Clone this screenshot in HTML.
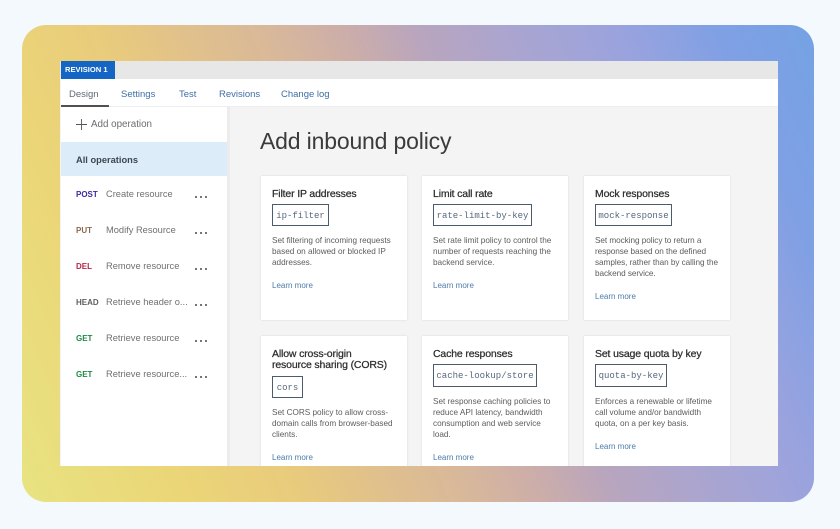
<!DOCTYPE html>
<html><head><meta charset="utf-8">
<style>
html,body{margin:0;padding:0}
body{width:840px;height:529px;overflow:hidden;position:relative;background:#f3f9fd;font-family:"Liberation Sans",sans-serif}
.a{position:absolute;white-space:nowrap}
#outer{position:absolute;left:22px;top:25px;width:792px;height:477px;border-radius:24px;background:
linear-gradient(67deg,#e8e382 0%,#ebd677 16%,#e9cb7c 28%,#e0c08c 37%,#d8b89a 45%,#cdaea8 52%,#b8a5be 60%,#aca5ce 68%,#9aa3de 80%,#80a0e4 90%,#74a2e4 100%)}
#win{position:absolute;left:60px;top:61px;width:718px;height:405px;background:#f4f4f4;overflow:hidden;filter:blur(.3px)}
#win .a{line-height:1}
.tab{font-size:9.5px;color:#3f6ea6;top:29px}
.m{font-size:8px;font-weight:bold;left:16px}
.op{font-size:9.3px;color:#707070;left:46px}
.dots{left:135px;width:12px;height:3px;display:flex;justify-content:space-between}
.dots i{display:block;width:2.4px;height:2.4px;border-radius:50%;background:#4a4a4a}
.card{position:absolute;width:146px;background:#fff;box-shadow:0 0 2px rgba(0,0,0,.12);overflow:hidden}
.card .t{position:absolute;left:11px;top:13px;font-size:10.5px;line-height:11.5px;color:#2d2d2d;letter-spacing:-.15px;-webkit-text-stroke:.25px #2d2d2d;white-space:nowrap}
.card .c{position:absolute;left:11px;height:22px;border:1px solid #4b5c6e;box-sizing:border-box;font:9px/22px "Liberation Mono",monospace;color:#55687d;text-align:center}
.card .d{position:absolute;left:11px;font-size:8.2px;line-height:11px;color:#5c5c5c;white-space:nowrap}
.card .l{position:absolute;left:11px;font-size:8px;line-height:10px;color:#4d7bab;white-space:nowrap}
</style></head>
<body>
<div id="outer"></div>
<div id="win">
  <div class="a" style="left:0;top:0;width:718px;height:18px;background:#e7e7e7"></div>
  <div class="a" style="left:1px;top:0;width:54px;height:18px;background:#1565c4;color:#fff;font-size:7.6px;font-weight:bold;line-height:18px;text-indent:4px">REVISION 1</div>
  <div class="a" style="left:1px;top:18px;width:717px;height:28px;background:#fff;border-bottom:1px solid #eee;box-sizing:border-box"></div>
  <div class="a tab" style="left:9px;color:#5f6a74">Design</div>
  <div class="a" style="left:1px;top:44px;width:48px;height:2px;background:#505050"></div>
  <div class="a tab" style="left:61px">Settings</div>
  <div class="a tab" style="left:119px">Test</div>
  <div class="a tab" style="left:159px">Revisions</div>
  <div class="a tab" style="left:221px">Change log</div>

  <div class="a" style="left:1px;top:46px;width:166px;height:359px;background:#fff"></div>
  <div class="a" style="left:167px;top:46px;width:3px;height:359px;background:#ececec"></div>
  <svg class="a" style="left:16px;top:58px" width="11" height="11" viewBox="0 0 11 11"><path d="M5.5 0V11M0 5.5H11" stroke="#555" stroke-width=".9" fill="none"/></svg>
  <div class="a" style="left:31px;top:59px;font-size:9.8px;color:#6d6d6d">Add operation</div>
  <div class="a" style="left:1px;top:81px;width:166px;height:34px;background:#dcecf9"></div>
  <div class="a" style="left:16px;top:95px;font-size:9.3px;font-weight:bold;color:#3e4650">All operations</div>

  <div class="a m" style="top:130px;color:#3a2aa0">POST</div><div class="a op" style="top:129px">Create resource</div><div class="a dots" style="top:135px"><i></i><i></i><i></i></div>
  <div class="a m" style="top:166px;color:#8a6a50">PUT</div><div class="a op" style="top:165px">Modify Resource</div><div class="a dots" style="top:171px"><i></i><i></i><i></i></div>
  <div class="a m" style="top:202px;color:#b5264a">DEL</div><div class="a op" style="top:201px">Remove resource</div><div class="a dots" style="top:207px"><i></i><i></i><i></i></div>
  <div class="a m" style="top:238px;color:#5f5f5f">HEAD</div><div class="a op" style="top:237px">Retrieve header o...</div><div class="a dots" style="top:243px"><i></i><i></i><i></i></div>
  <div class="a m" style="top:274px;color:#1f8a45">GET</div><div class="a op" style="top:273px">Retrieve resource</div><div class="a dots" style="top:279px"><i></i><i></i><i></i></div>
  <div class="a m" style="top:310px;color:#1f8a45">GET</div><div class="a op" style="top:309px">Retrieve resource...</div><div class="a dots" style="top:315px"><i></i><i></i><i></i></div>

  <div class="a" style="left:200px;top:69px;font-size:23px;color:#3b3b3b;letter-spacing:-.17px">Add inbound policy</div>

  <div class="card" style="left:201px;top:115px;height:144px">
    <div class="t">Filter IP addresses</div>
    <div class="c" style="top:28px;width:57px">ip-filter</div>
    <div class="d" style="top:59px">Set filtering of incoming requests<br>based on allowed or blocked IP<br>addresses.</div>
    <div class="l" style="top:105px">Learn more</div>
  </div>
  <div class="card" style="left:362px;top:115px;height:144px">
    <div class="t">Limit call rate</div>
    <div class="c" style="top:28px;width:99px">rate-limit-by-key</div>
    <div class="d" style="top:59px">Set rate limit policy to control the<br>number of requests reaching the<br>backend service.</div>
    <div class="l" style="top:105px">Learn more</div>
  </div>
  <div class="card" style="left:524px;top:115px;height:144px">
    <div class="t">Mock responses</div>
    <div class="c" style="top:28px;width:77px">mock-response</div>
    <div class="d" style="top:59px;letter-spacing:-.05px">Set mocking policy to return a<br>response based on the defined<br>samples, rather than by calling the<br>backend service.</div>
    <div class="l" style="top:116px">Learn more</div>
  </div>

  <div class="card" style="left:201px;top:275px;height:140px">
    <div class="t" style="line-height:11px">Allow cross-origin<br>resource sharing (CORS)</div>
    <div class="c" style="top:40px;width:31px">cors</div>
    <div class="d" style="top:71px">Set CORS policy to allow cross-<br>domain calls from browser-based<br>clients.</div>
    <div class="l" style="top:117px">Learn more</div>
  </div>
  <div class="card" style="left:362px;top:275px;height:140px">
    <div class="t">Cache responses</div>
    <div class="c" style="top:28px;width:104px;height:23px">cache-lookup/store</div>
    <div class="d" style="top:60px">Set response caching policies to<br>reduce API latency, bandwidth<br>consumption and web service<br>load.</div>
    <div class="l" style="top:117px">Learn more</div>
  </div>
  <div class="card" style="left:524px;top:275px;height:140px">
    <div class="t">Set usage quota by key</div>
    <div class="c" style="top:28px;width:72px;height:23px">quota-by-key</div>
    <div class="d" style="top:60px">Enforces a renewable or lifetime<br>call volume and/or bandwidth<br>quota, on a per key basis.</div>
    <div class="l" style="top:106px">Learn more</div>
  </div>
</div>
</body></html>
